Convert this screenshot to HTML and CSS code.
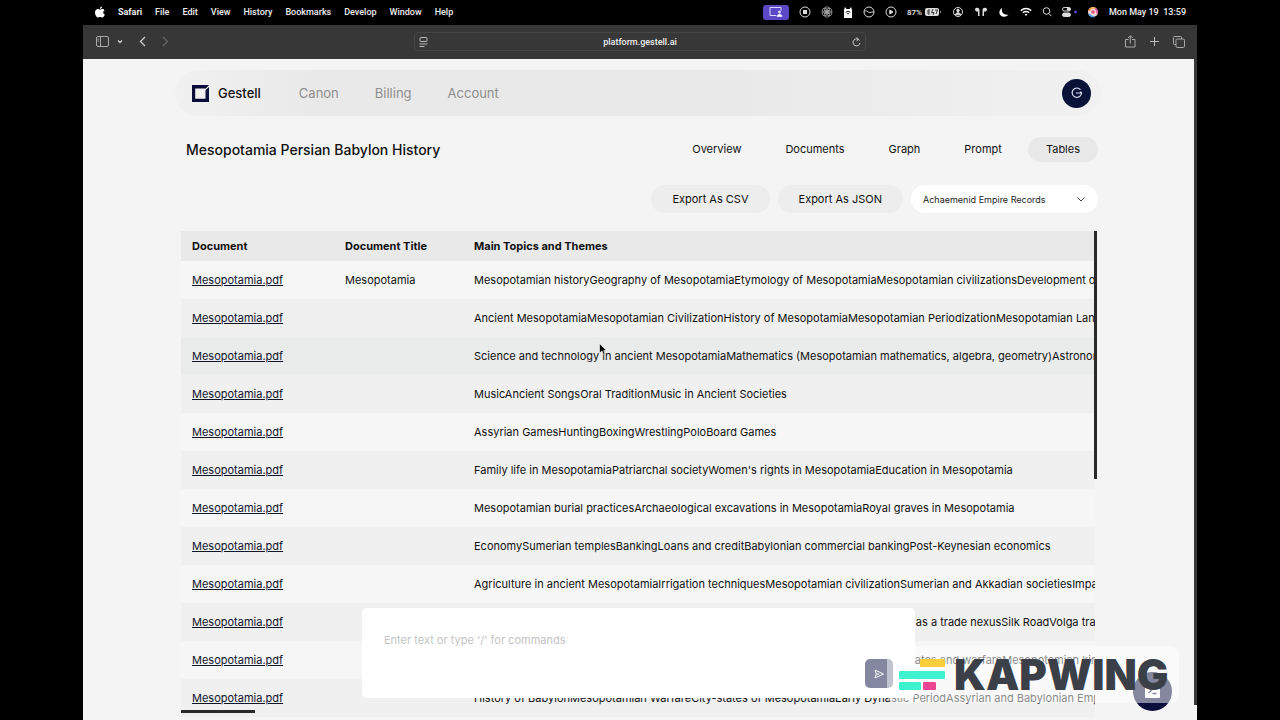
FILE: index.html
```html
<!DOCTYPE html>
<html lang="en">
<head>
  <meta charset="UTF-8">
  <title>Gestell</title>
  <link rel="stylesheet" href="styles.css">
</head>
<body>
<div class="screen">
  <header class="menubar">
    <nav class="menus" aria-label="Menu bar">
      <svg width="10" height="12" viewBox="0 0 20 24" fill="#fff"><path d="M14 1c.2 2.600-1.800 5-4.200 5C9.500 3.500 11.600 1.300 14 1zM10.200 7.300c1 0 2.400-1.300 4.600-1.300 1.800 0 3.400 1 4.200 2.300-3.700 2.200-3 7.200.7 8.600C18.700 19.600 16.800 23 14.600 23c-1.700 0-2.300-1-4.300-1s-2.700 1-4.300 1C3 23 0 17.400 0 13.200 0 8.800 2.900 6.200 5.800 6.200c1.900 0 3.300 1.100 4.400 1.100z"/></svg>
      <b>Safari</b><span>File</span><span>Edit</span><span>View</span><span>History</span><span>Bookmarks</span><span>Develop</span><span>Window</span><span>Help</span>
    </nav>
    <div class="tray">
      <span class="share-badge"><svg width="14" height="10" viewBox="0 0 14 10" fill="none" stroke="#ddd6ff"><path d="M7 8.500H1v-8h11v3"/><circle cx="10.500" cy="5" r="1" fill="#fff"/><path d="M8 9.500c0-3 5-3 5 0z" fill="#fff"/></svg></span>
      <svg width="12" height="12" viewBox="0 0 12 12" fill="none" stroke="#ddd"><circle cx="6" cy="6" r="5"/><rect x="4.500" y="4.500" width="3" height="3" fill="#ddd"/></svg>
      <svg width="12" height="12" viewBox="0 0 12 12" fill="none" stroke="#aaa" stroke-width=".8"><ellipse cx="6" cy="3.800" rx="2.600" ry="3"/><ellipse cx="6" cy="3.800" rx="2.600" ry="3" transform="rotate(60 6 6)"/><ellipse cx="6" cy="3.800" rx="2.600" ry="3" transform="rotate(120 6 6)"/><ellipse cx="6" cy="3.800" rx="2.600" ry="3" transform="rotate(180 6 6)"/><ellipse cx="6" cy="3.800" rx="2.600" ry="3" transform="rotate(240 6 6)"/><ellipse cx="6" cy="3.800" rx="2.600" ry="3" transform="rotate(300 6 6)"/></svg>
      <svg width="10" height="12" viewBox="0 0 10 12"><path d="M1 12V4l1-3 1.500 2h3L8 1l1 3v8z" fill="#fff"/><path d="M2.500 6.300Q5 4.300 7.500 6.300M4 8q1-1 2 0" stroke="#222" fill="none"/></svg>
      <svg width="12" height="12" viewBox="0 0 12 12" fill="none" stroke="#ddd"><circle cx="6" cy="6" r="5"/><path d="M1.500 5.500C4 3.500 5 7 7 6.500s2.500-.500 4-.500"/></svg>
      <svg width="12" height="12" viewBox="0 0 12 12" fill="none" stroke="#ddd"><circle cx="6" cy="6" r="5"/><path d="M4.800 4v4L8 6z" fill="#ddd"/></svg>
      <span class="battery">87% <svg width="17" height="8" viewBox="0 0 17 8"><rect width="14" height="8" rx="2" fill="#ddd"/><path d="M15 2.500q2 1.500 0 3z" fill="#999"/><path d="M5 2H3v4h2M3 4h2M8 1L6.500 4.500H9L8 7M10 2h2.500L11 6" stroke="#222" fill="none" stroke-width=".9"/></svg></span>
      <svg width="12" height="12" viewBox="0 0 12 12" fill="none" stroke="#ddd"><circle cx="6" cy="6" r="4.500"/><circle cx="6" cy="4.500" r="1.300" fill="#ddd"/><path d="M3.500 8.800c0-2.800 5-2.800 5 0z" fill="#ddd"/></svg>
      <svg width="14" height="12" viewBox="0 0 14 12" fill="#ddd"><path d="M1 3.500C1 1 5.500 1 5.500 4v6H4V5.500C2.500 6 1 5 1 3.500zM13 3.500C13 1 8.500 1 8.500 4v6H10V5.500c1.500.500 3-.500 3-2z"/></svg>
      <svg width="12" height="12" viewBox="0 0 12 12" fill="#fff"><path d="M4 2C3 7 6 9.500 10.500 8.500 7 13 .500 10 1.500 5.500 2 3.500 3 2.500 4 2z"/></svg>
      <svg width="12" height="12" viewBox="0 0 12 12" fill="none" stroke="#fff" stroke-width="1.400"><path d="M.800 4.600q5.200-4.200 10.400 0M2.800 6.800q3.200-2.600 6.400 0"/><path d="M4.600 8.300q1.400-1 2.800 0L6 10z" fill="#fff" stroke="none"/></svg>
      <svg width="10" height="12" viewBox="0 0 10 12" fill="none" stroke="#ddd"><circle cx="4.500" cy="5" r="3.300"/><path d="M7 7.600l2.400 2.600"/></svg>
      <svg width="15" height="12" viewBox="0 0 15 12" fill="none" stroke="#ddd"><rect x=".500" y="1.500" width="8" height="3.500" rx="1.700"/><rect x=".500" y="7" width="8" height="3.500" rx="1.700" fill="#ddd"/><circle cx="6.700" cy="3.200" r="1.400" fill="#ddd"/><circle cx="13.500" cy="6" r="1.400" fill="#5b4bd0" stroke="none"/></svg>
      <svg width="12" height="12" viewBox="0 0 12 12"><circle cx="6" cy="6" r="5" fill="#f4d5d8"/><path d="M2 8q2 3 5 2.600" stroke="#4aa3f5" stroke-width="1.500" fill="none"/><path d="M2 5q2-4 6-3" stroke="#f2a33a" stroke-width="1.500" fill="none"/><path d="M8 2.500q3 2 2 5" stroke="#e5489b" stroke-width="1.500" fill="none"/><circle cx="6" cy="6" r="1.800" fill="#e8547a"/></svg>
      <time>Mon May 19&nbsp; 13:59</time>
    </div>
  </header>

  <div class="toolbar">
    <div class="tools">
      <button class="tool" aria-label="Sidebar"><svg width="13" height="11" viewBox="0 0 13 11" fill="none" stroke="#aaa"><rect x=".500" y=".500" width="12" height="10" rx="1.500"/><path d="M4.500.500v10M1.500 3h1.500M1.500 5h1.500"/></svg></button>
      <button class="tool" aria-label="Tab groups"><svg width="6" height="11" viewBox="0 0 6 11" fill="none" stroke="#ccc" stroke-width="1.300"><path d="M1 4.500l2 2 2-2"/></svg></button>
      <button class="tool tool-arrow" aria-label="Back"><svg width="7" height="11" viewBox="0 0 7 11" fill="none" stroke="#ccc" stroke-width="1.300"><path d="M6 1L1.500 5.500 6 10"/></svg></button>
      <button class="tool tool-arrow" aria-label="Forward" disabled><svg width="7" height="11" viewBox="0 0 7 11" fill="none" stroke="#666" stroke-width="1.200"><path d="M1 1l4.500 4.500L1 10"/></svg></button>
    </div>
    <div class="address">
      <svg width="9" height="10" viewBox="0 0 9 10" fill="none" stroke="#bbb"><rect x="1" y=".500" width="7" height="4" rx="1"/><path d="M.500 7h8M.500 9.500h5"/></svg>
      <span>platform.gestell.ai</span>
      <button class="tool" aria-label="Reload"><svg width="9" height="10" viewBox="0 0 9 10" fill="none" stroke="#ccc"><path d="M7.500 3.500A3.500 3.500 0 1 0 8 6M4.500.300L6.500 2.200 4.500 4"/></svg></button>
    </div>
    <div class="tools tools-right">
      <button class="tool" aria-label="Share"><svg width="11" height="13" viewBox="0 0 11 13" fill="none" stroke="#aaa"><path d="M3.500 4.500h-3v7.500h9.500V4.500H7M5.300 8.500V1M3 3l2.300-2.300L7.600 3"/></svg></button>
      <button class="tool" aria-label="New tab"><svg width="9" height="9" viewBox="0 0 9 9" stroke="#bbb"><path d="M4.500 0v9M0 4.500h9"/></svg></button>
      <button class="tool" aria-label="Tabs"><svg width="12" height="12" viewBox="0 0 12 12" fill="none" stroke="#aaa"><path d="M3 8.500H1.500q-1 0-1-1v-6q0-1 1-1h6q1 0 1 1V3"/><rect x="3" y="3" width="8.500" height="8.500" rx="1.200"/></svg></button>
    </div>
  </div>

  <main class="page">
    <header class="site-header">
      <a class="brand" href="#"><svg width="17" height="17" viewBox="0 0 17 17"><path fill="#0a0d3a" fill-rule="evenodd" d="M0 0h17l-3.200 3.500H3.200v10.300h10.300V5L17 2v15H0z"/></svg>Gestell</a>
      <nav class="site-nav">
        <a href="#">Canon</a><a href="#">Billing</a><a href="#">Account</a>
      </nav>
      <button class="logout" aria-label="Log out"><svg width="12" height="12" viewBox="0 0 12 12" fill="none" stroke="#dfe3f5" stroke-width="1.100"><path d="M9.500 2.700A4.700 4.700 0 1 0 10.500 6.500M5 6h6M9.300 4.800L11 6"/></svg></button>
    </header>

    <div class="title-row">
      <h1>Mesopotamia Persian Babylon History</h1>
      <nav class="tabs">
        <a href="#">Overview</a><a href="#">Documents</a><a href="#">Graph</a><a href="#">Prompt</a><a class="active" href="#">Tables</a>
      </nav>
    </div>

    <div class="actions">
      <button class="export">Export As CSV</button>
      <button class="export">Export As JSON</button>
      <span class="picker">
        <select aria-label="Table"><option>Achaemenid Empire Records</option></select>
        <svg width="8" height="5" viewBox="0 0 8 5" fill="none" stroke="#444"><path d="M.500.500L4 4 7.500.500"/></svg>
      </span>
    </div>

    <div class="table-wrap">
      <table>
        <colgroup><col class="col-doc"><col class="col-title"><col></colgroup>
        <thead><tr><th>Document</th><th>Document Title</th><th>Main Topics and Themes</th></tr></thead>
        <tbody>
          <tr><td><a href="#">Mesopotamia.pdf</a></td><td>Mesopotamia</td><td>Mesopotamian historyGeography of MesopotamiaEtymology of MesopotamiaMesopotamian civilizationsDevelopment of writing</td></tr>
          <tr><td><a href="#">Mesopotamia.pdf</a></td><td></td><td>Ancient MesopotamiaMesopotamian CivilizationHistory of MesopotamiaMesopotamian PeriodizationMesopotamian Languages</td></tr>
          <tr class="hover"><td><a href="#">Mesopotamia.pdf</a></td><td></td><td>Science and technology in ancient MesopotamiaMathematics (Mesopotamian mathematics, algebra, geometry)Astronomy</td></tr>
          <tr><td><a href="#">Mesopotamia.pdf</a></td><td></td><td>MusicAncient SongsOral TraditionMusic in Ancient Societies</td></tr>
          <tr><td><a href="#">Mesopotamia.pdf</a></td><td></td><td>Assyrian GamesHuntingBoxingWrestlingPoloBoard Games</td></tr>
          <tr><td><a href="#">Mesopotamia.pdf</a></td><td></td><td>Family life in MesopotamiaPatriarchal societyWomen's rights in MesopotamiaEducation in Mesopotamia</td></tr>
          <tr><td><a href="#">Mesopotamia.pdf</a></td><td></td><td>Mesopotamian burial practicesArchaeological excavations in MesopotamiaRoyal graves in Mesopotamia</td></tr>
          <tr><td><a href="#">Mesopotamia.pdf</a></td><td></td><td>EconomySumerian templesBankingLoans and creditBabylonian commercial bankingPost-Keynesian economics</td></tr>
          <tr><td><a href="#">Mesopotamia.pdf</a></td><td></td><td>Agriculture in ancient MesopotamiaIrrigation techniquesMesopotamian civilizationSumerian and Akkadian societiesImpact of farming</td></tr>
          <tr><td><a href="#">Mesopotamia.pdf</a></td><td></td><td>Mesopotamian tradeAncient commercial trade routesIndus Valley tradeMesopotamia as a trade nexusSilk RoadVolga trade route</td></tr>
          <tr><td><a href="#">Mesopotamia.pdf</a></td><td></td><td>Mesopotamian geography and climatesGovernment, priesthood and kingshipsCity-states and warfareMesopotamian kings and rulers</td></tr>
          <tr><td><a href="#">Mesopotamia.pdf</a></td><td></td><td>History of BabylonMesopotamian WarfareCity-states of MesopotamiaEarly Dynastic PeriodAssyrian and Babylonian Empires</td></tr>
        </tbody>
      </table>
      <span class="scroll-y"></span>
      <span class="scroll-x"></span>
    </div>

    <form class="prompt">
      <textarea aria-label="Prompt" placeholder="Enter text or type '/' for commands"></textarea>
      <button class="send" type="button" aria-label="Send"><svg width="10" height="10" viewBox="0 0 10 10" fill="none" stroke="#fff"><path d="M1 1l8.500 4L1 9l1.300-4zM2.300 5h3"/></svg></button>
    </form>
    <button class="feedback" aria-label="Terminal"><svg width="15" height="12" viewBox="0 0 15 12"><rect width="15" height="12" rx="1" fill="#fff"/><path d="M3.500 2l3 2.500-3 2.500M7.500 7.500h4" stroke="#0a0f3c" stroke-width="1.300" fill="none"/></svg></button>
    <span class="window-edge"></span>
  </main>

  <div class="watermark">
    <svg width="46" height="32" viewBox="0 0 46 32"><rect x="21" y="0" width="25" height="8" rx="1" fill="#f9ce3a"/><rect x="0" y="12" width="46" height="8" rx="1" fill="#3df2cf"/><rect x="0" y="23" width="22" height="8" rx="1" fill="#3df2cf"/><rect x="24" y="23" width="13" height="8" rx="1" fill="#ec4392"/></svg>
    <span>KAPWING</span>
  </div>
  <svg class="cursor" width="8" height="12" viewBox="0 0 8 12"><path d="M.500.500v9.500L3 8l1.500 3.500 1.500-.600L4.700 7.500H7.500z" fill="#000" stroke="#fff" stroke-width=".6"/></svg>
</div>
</body>
</html>
```
FILE: styles.css
```css
*{box-sizing:border-box;}
body{margin:0;background:#000;font-family:Inter,"Open Sans",sans-serif;font-size:11px;color:#111;overflow:hidden;}
a{color:inherit;text-decoration:none;}
button{font:inherit;color:inherit;border:0;padding:0;background:none;}
svg{display:block;flex:none;}
.screen{position:relative;display:flex;flex-direction:column;height:100vh;padding:0 83px;}

.menubar{display:flex;justify-content:space-between;align-items:center;height:25px;padding:0 11px 1px 12px;color:#eee;font-family:Roboto,sans-serif;font-size:9px;font-weight:500;flex:none;}
.menus,.tray{display:flex;align-items:center;gap:13px;}
.tray{gap:10px;}
.share-badge{display:grid;place-items:center;width:26px;height:15px;border-radius:3px;background:#5b48c4;}
.battery{display:flex;align-items:center;gap:3px;font-size:8px;}

.toolbar{display:grid;grid-template-columns:1fr 452px 1fr;align-items:center;height:34px;padding-bottom:1px;background:#373737;flex:none;}
.tools{display:flex;align-items:center;gap:8px;padding-left:13px;}
.tool-arrow{margin-left:8px;}
.tools-right{justify-content:flex-end;gap:14px;padding:0 12px 0 0;}
.address{display:flex;align-items:center;justify-content:space-between;height:19px;padding:0 4px;border:1px solid #454545;border-radius:4px;color:#eee;font-family:Roboto,sans-serif;font-size:9px;font-weight:500;}

.page{position:relative;flex:1;min-height:0;display:flex;flex-direction:column;padding:11px 96px 0 92px;background:#f4f4f4;overflow:hidden;}
.site-header{display:flex;align-items:center;height:46px;padding:0 10px 0 17px;border-radius:23px;background:linear-gradient(90deg,#f1f1f1,#e9e9e9 15%,#e9e9e9 60%,#f1f1f1);flex:none;}
.brand{display:flex;align-items:center;gap:9px;font-size:13px;font-weight:500;}
.site-nav{display:flex;gap:36px;margin-left:38px;font-size:13px;color:#8e8e8e;}
.logout{display:grid;place-items:center;width:29px;height:29px;margin-left:auto;border-radius:50%;background:#0a1238;}

.title-row{display:flex;align-items:center;justify-content:space-between;margin-top:21px;padding:0 3px 0 11px;flex:none;}
h1{margin:0;font-size:14px;font-weight:500;}
.tabs{display:flex;gap:8px;}
.tabs a{padding:0 18px;border-radius:13px;line-height:25px;}
.tabs .active{background:#e8e8e8;}

.actions{display:flex;justify-content:flex-end;gap:8px;margin-top:23px;padding-right:3px;flex:none;}
.export{height:28px;padding:0 21px;border-radius:14px;background:#ededed;}
.picker{position:relative;width:187px;}
.picker select{appearance:none;width:100%;height:28px;padding:0 12px;border:0;border-radius:14px;background:#fff;font:9px Inter,sans-serif;color:#222;}
.picker svg{position:absolute;right:13px;top:12px;pointer-events:none;}

.table-wrap{position:relative;flex:1;min-height:0;margin:18px 6px 0;}
table{width:100%;table-layout:fixed;border-collapse:collapse;white-space:nowrap;}
.col-doc{width:153px;}
.col-title{width:129px;}
th,td{height:38px;padding:0 11px;text-align:left;}
th{height:30px;background:#e9e9e9;font-weight:700;}
td:last-child{padding-right:0;overflow:hidden;}
tbody tr{background:#f6f6f6;}
tbody tr:nth-child(even){background:#f0f0f0;}
tbody tr.hover{background:#eaebeb;}
td a{text-decoration:underline;text-underline-offset:1px;color:#10132c;}
.scroll-y{position:absolute;right:-2px;top:0;width:3px;height:248px;background:#2a2a2a;}
.scroll-x{position:absolute;left:0;bottom:7px;width:74px;height:3px;background:#2a2a2a;}

.prompt{position:absolute;left:279px;right:282px;bottom:22px;height:90px;border-radius:5px;background:#fff;}
.prompt textarea{display:block;width:100%;height:100%;padding:24px 60px 8px 22px;border:0;background:none;resize:none;font:11px/16px Inter,sans-serif;}
.prompt textarea::placeholder{color:#c4c4c4;}
.send{position:absolute;right:22px;bottom:10px;display:grid;place-items:center;width:28px;height:29px;border-radius:5px;background:#8387a0;}
.feedback{position:absolute;right:25px;bottom:9px;display:grid;place-items:center;width:39px;height:39px;border-radius:50%;background:#0a0f3c;}
.window-edge{position:absolute;right:0;top:0;bottom:15px;width:3px;background:#373737;}

.watermark{position:absolute;left:887px;right:101px;bottom:17px;display:flex;align-items:center;gap:9px;height:57px;padding-left:12px;border-radius:8px;background:rgba(255,255,255,.5);color:#3b3f48;font-size:42px;font-weight:900;line-height:1;}
.cursor{position:absolute;left:599px;top:343px;}
```
